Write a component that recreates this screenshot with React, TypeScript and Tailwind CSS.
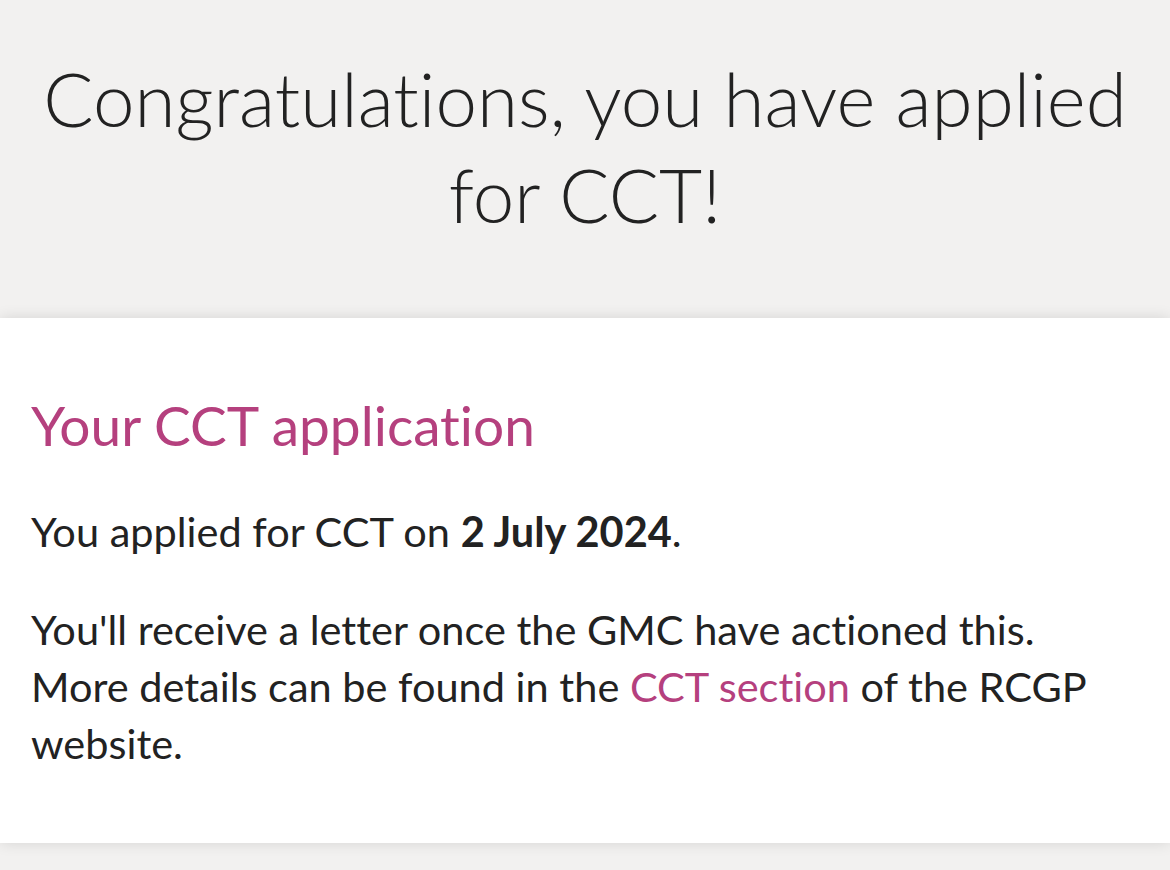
export default function App() {
  return (
    <div
      className="min-h-[870px] w-[1170px] bg-[#f2f1f0] overflow-hidden [font-variant-ligatures:none]"
      style={{ fontFamily: "Lato, 'Noto Sans', sans-serif" }}
    >
      <header className="h-[318px] flex items-start justify-center pt-[50px] px-[20px]">
        <h1 className="text-center text-[74.5px] leading-[96px] font-light text-[#222222]">
          Congratulations, you have applied for CCT!
        </h1>
      </header>
      <main className="bg-white h-[525px] shadow-[0_0_14px_rgba(0,0,0,0.12)] px-[31px] pt-[75px]">
        <h2 className="text-[55px] leading-[64px] text-[#b5407e] font-normal">Your CCT application</h2>
        <p className="mt-[46px] text-[41.5px] leading-[57px] text-[#222222]">
          You applied for CCT on <strong className="font-bold">2 July 2024</strong>.
        </p>
        <p className="mt-[41px] text-[41.5px] leading-[57px] text-[#222222]">
          You'll receive a letter once the GMC have actioned this. More details can be found in the{" "}
          <a className="text-[#b5407e]">CCT section</a> of the RCGP website.
        </p>
      </main>
    </div>
  );
}
